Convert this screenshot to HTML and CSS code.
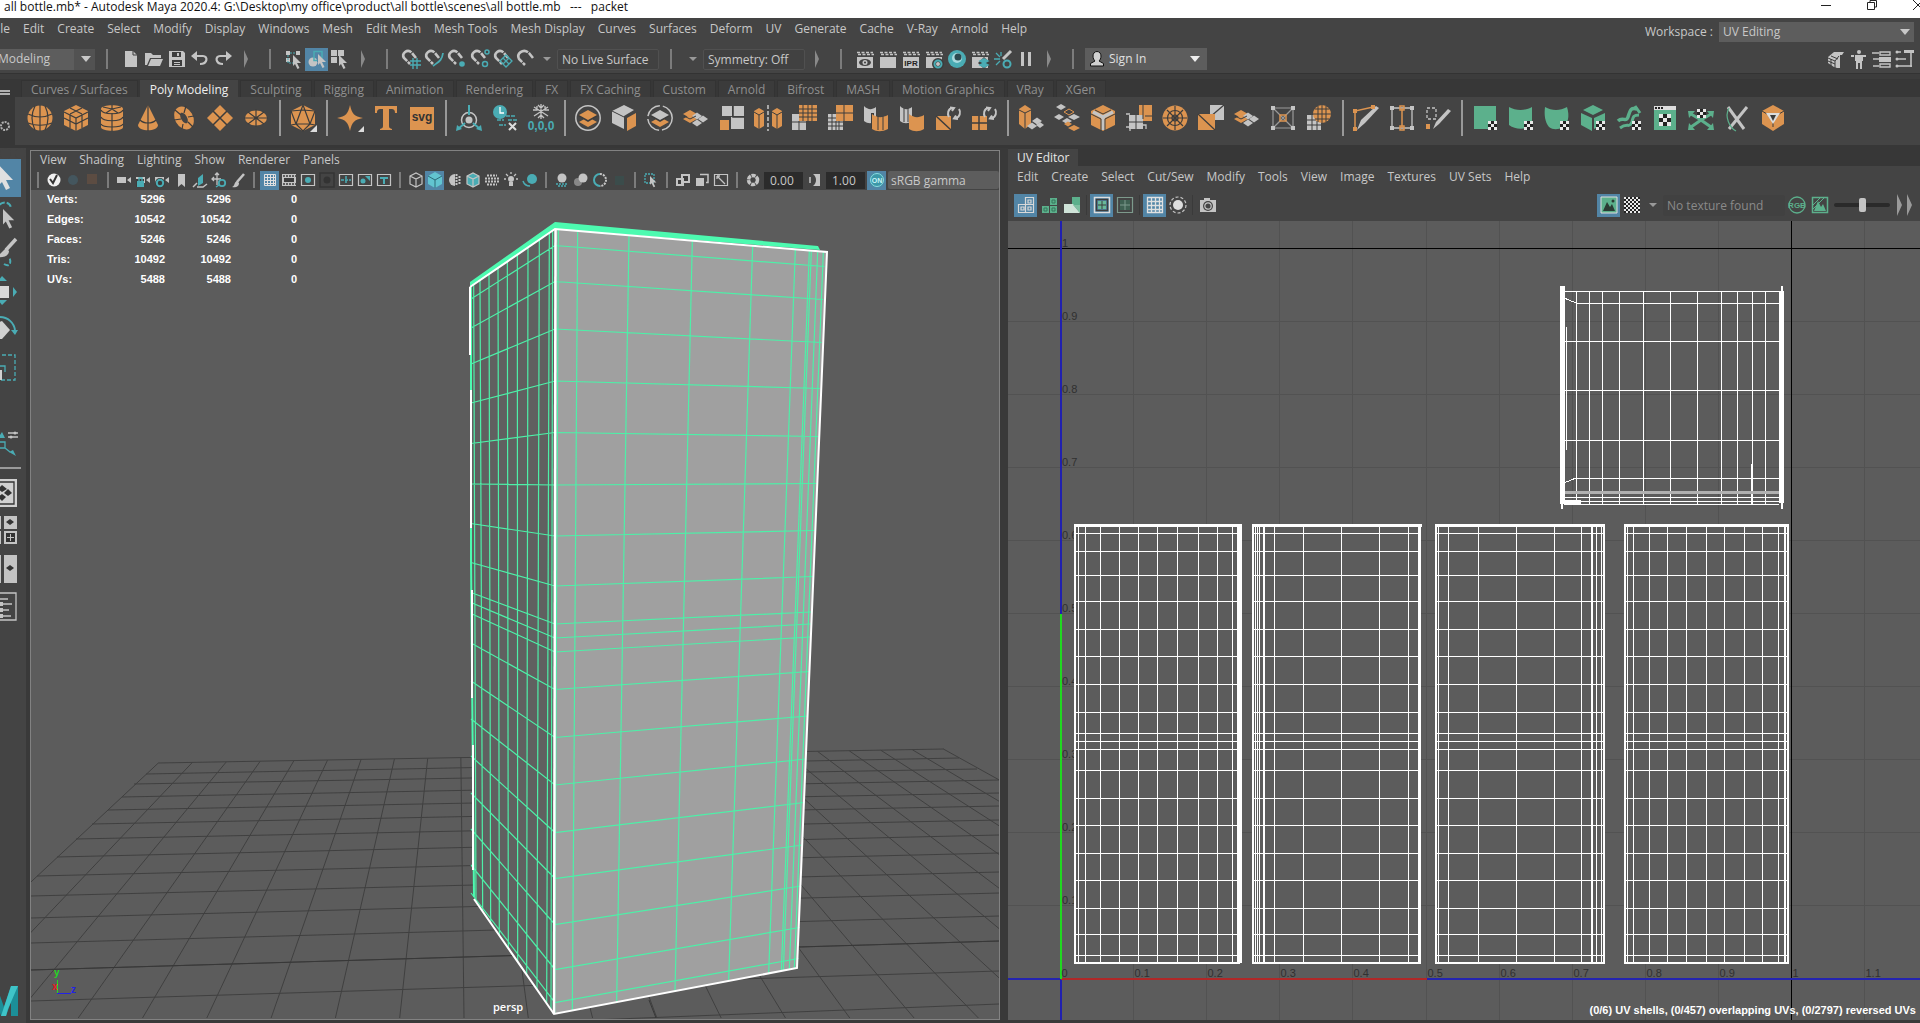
FILE: index.html
```html
<!DOCTYPE html>
<html lang="en">
<head>
<meta charset="utf-8">
<title>all bottle.mb* - Autodesk Maya 2020.4</title>
<link rel="stylesheet" href="styles.css">
</head>
<body>
<div class="app">
  <header class="titlebar">
    <span class="title">all bottle.mb* - Autodesk Maya 2020.4: G:\Desktop\my office\product\all bottle\scenes\all bottle.mb&nbsp;&nbsp; ---&nbsp;&nbsp; packet</span>
    <div class="window-buttons">
      <button aria-label="Minimize"><svg width="12" height="12" viewBox="0 0 12 12"><path d="M1 5.500h10" stroke="#222" fill="none"/></svg></button>
      <button aria-label="Restore"><svg width="12" height="12" viewBox="0 0 12 12"><path d="M1.500 2.500h7v7h-7zM4 2V.500h6.500v6.500H9" stroke="#222" fill="none"/></svg></button>
      <button aria-label="Close"><svg width="12" height="12" viewBox="0 0 12 12"><path d="M1 0l10 10M11 0L1 10" stroke="#222" fill="none"/></svg></button>
    </div>
  </header>

  <div class="menubar">
    <nav class="menu menu-main"><a href="#">File</a><a href="#">Edit</a><a href="#">Create</a><a href="#">Select</a><a href="#">Modify</a><a href="#">Display</a><a href="#">Windows</a><a href="#">Mesh</a><a href="#">Edit Mesh</a><a href="#">Mesh Tools</a><a href="#">Mesh Display</a><a href="#">Curves</a><a href="#">Surfaces</a><a href="#">Deform</a><a href="#">UV</a><a href="#">Generate</a><a href="#">Cache</a><a href="#">V-Ray</a><a href="#">Arnold</a><a href="#">Help</a></nav>
    <div class="workspace">
      <label for="workspace">Workspace :</label>
      <span class="picker picker-workspace"><select id="workspace"><option>UV Editing</option></select></span>
    </div>
  </div>

  <div class="statusline">
    <span class="picker picker-mode"><select aria-label="Menu set"><option>Modeling</option></select></span>
    <div class="tools" data-set="status" data-tools="| new open save undo redo > | selH *selO selC > | snapG snapC snapP snapV snapS snap"></div>
    <span class="drop"></span>
    <input class="field" aria-label="Live surface" value="No Live Surface">
    <div class="tools" data-set="status" data-tools="|"></div>
    <span class="drop"></span>
    <input class="field" aria-label="Symmetry" value="Symmetry: Off">
    <div class="tools" data-set="status" data-tools="> | rView rFrame rIpr rSet rRing rLayer rLight pause > |"></div>
    <button class="signin"><svg width="16" height="18" viewBox="0 0 16 18"><path d="M8 1.500c2.500 0 4 2 4 4.500s-1 4-2 5l4.500 2.500V16h-13v-2.500L6 11c-1-1-2-2.500-2-5s1.500-4.500 4-4.500z" fill="#d0d0d0" stroke="#111"/></svg>Sign In<span class="drop"></span></button>
    <div class="tools tools-end" data-set="status" data-tools="sbBox sbMan sbAttr sbTool"></div>
  </div>

  <div class="shelf">
    <div class="shelf-handle"><svg width="16" height="62" viewBox="0 0 16 62"><path d="M0 12h10M0 15h10" stroke="#b0b0b0" stroke-width="2"/><circle cx="5" cy="47" r="4" stroke="#b0b0b0" stroke-width="2" fill="none" stroke-dasharray="2 1"/></svg></div>
    <div class="shelf-body">
      <nav class="tabs"><a href="#">Curves / Surfaces</a><a href="#" class="on">Poly Modeling</a><a href="#">Sculpting</a><a href="#">Rigging</a><a href="#">Animation</a><a href="#">Rendering</a><a href="#">FX</a><a href="#">FX Caching</a><a href="#">Custom</a><a href="#">Arnold</a><a href="#">Bifrost</a><a href="#">MASH</a><a href="#">Motion Graphics</a><a href="#">VRay</a><a href="#">XGen</a></nav>
      <div class="tools" data-set="shelf" data-tools="sphere cube cyl cone torus plane disc | plato | star type svg | pivot hist freeze | combine separate inter boolean extract mirror grid1 grid2 sweep1 sweep2 spin1 spin2 | extrude bridge bevel merge circ quad layer target ballgrid | cut loop pen | uvPlane uvCyl uvSph uvCube uvCont uvEd uvCut uvSew uvGem"></div>
    </div>
  </div>

  <main class="workarea">
    <aside class="toolbox" data-set="box" data-tools="*select lasso paint move rotate scale gap manip line lay1 lay2 lay3 lay4"></aside>

    <section class="panel viewport">
      <nav class="menu"><a href="#">View</a><a href="#">Shading</a><a href="#">Lighting</a><a href="#">Show</a><a href="#">Renderer</a><a href="#">Panels</a></nav>
      <div class="panelbar">
        <div class="tools" data-set="panel" data-tools="| vray dim1 dim2 | cam camLock camSet mark img pan brush | *gridI film gate dimDot cross safe tFrame | wire *shade tex lit dots light shadow | ao blur aa dimSq | pick | iso1 iso2 xray | expo"></div>
        <input class="num" aria-label="Exposure" value="0.00">
        <div class="tools" data-set="panel" data-tools="gamma"></div>
        <input class="num" aria-label="Gamma" value="1.00">
        <div class="tools" data-set="panel" data-tools="*on"></div>
        <input class="field field-view" aria-label="View transform" value="sRGB gamma">
      </div>
      <div class="canvas">
        <svg id="persp" viewBox="31 190 968 829" preserveAspectRatio="xMidYMid slice"></svg>
        <table class="stats">
          <tr><th>Verts:</th><td>5296</td><td>5296</td><td>0</td></tr>
          <tr><th>Edges:</th><td>10542</td><td>10542</td><td>0</td></tr>
          <tr><th>Faces:</th><td>5246</td><td>5246</td><td>0</td></tr>
          <tr><th>Tris:</th><td>10492</td><td>10492</td><td>0</td></tr>
          <tr><th>UVs:</th><td>5488</td><td>5488</td><td>0</td></tr>
        </table>
        <span class="camera">persp</span>
      </div>
    </section>

    <section class="panel uv">
      <div class="uvtabs"><a href="#">UV Editor</a></div>
      <nav class="menu"><a href="#">Edit</a><a href="#">Create</a><a href="#">Select</a><a href="#">Cut/Sew</a><a href="#">Modify</a><a href="#">Tools</a><a href="#">View</a><a href="#">Image</a><a href="#">Textures</a><a href="#">UV Sets</a><a href="#">Help</a></nav>
      <div class="uvbar">
        <div class="tools" data-set="uvt" data-tools="*uWire uShade uDist | *uBord uBord2 | *uGrid uIso | uCam"></div>
        <div class="uvbar-end">
          <div class="tools" data-set="uvt" data-tools="*uImg uCheck"></div>
          <span class="drop"></span>
          <input class="field field-texture" aria-label="Texture" value="No texture found">
          <div class="tools" data-set="uvt" data-tools="uRgb uPic"></div>
          <input type="range" aria-label="Image brightness" min="0" max="100" value="50">
          <svg width="20" height="22" viewBox="0 0 20 22"><path d="M1 0l5 11-5 11zM11 0l5 11-5 11z" fill="#9a9a9a"/></svg>
        </div>
      </div>
      <div class="canvas">
        <svg id="uvs" viewBox="1008 221 912 799" preserveAspectRatio="xMidYMid slice"></svg>
        <span class="uvinfo">(0/6) UV shells, (0/457) overlapping UVs, (0/2797) reversed UVs</span>
      </div>
    </section>
  </main>
</div>
<script src="app.js"></script>
</body>
</html>
```

FILE: styles.css
```css
* { box-sizing: border-box; }
html, body { height: 100%; margin: 0; overflow: hidden; }
body {
  background: #444;
  color: #c8c8c8;
  font: 12px/16px "Open Sans", "Noto Sans", sans-serif;
}
a { color: inherit; text-decoration: none; }
button, input, select { font: inherit; color: inherit; border: 0; margin: 0; padding: 0; background: none; }
svg { display: block; }

.app { display: flex; flex-direction: column; height: 100%; }

.titlebar {
  display: flex; justify-content: space-between; align-items: flex-start;
  height: 18px; padding: 0 0 0 4px; background: #fff; color: #111; line-height: 14px;
}
.window-buttons { display: flex; gap: 34px; margin-right: -4px; }

.menubar { display: flex; justify-content: space-between; height: 27px; }
.menu { display: flex; gap: 13px; white-space: nowrap; }
.menu-main { margin-left: -9px; padding-top: 3px; }
.workspace { display: flex; align-items: center; gap: 6px; padding-right: 6px; }

.picker { position: relative; display: flex; background: #5d5d5d; }
.picker select { appearance: none; width: 100%; height: 20px; padding-left: 4px; border-radius: 0; }
.picker::after, .drop::after {
  content: ""; border: 5px solid transparent; border-top: 6px solid #c8c8c8; border-bottom: 0;
}
.picker::after { position: absolute; right: 4px; top: 7px; pointer-events: none; }
.picker-workspace { width: 195px; }
.picker-mode { width: 95px; }
.picker-mode select { height: 21px; padding-left: 0; text-indent: -2px; border-right: 21px solid #525252; }
.drop { display: flex; align-items: center; justify-content: center; width: 20px; }
.drop::after { border-width: 4px 4px 0; border-top-color: #999; }

.statusline { display: flex; align-items: center; height: 28px; }
.field { width: 102px; height: 21px; padding: 0 4px; border: 1px solid #505050; border-radius: 2px; background: #414141; }
.signin { display: flex; align-items: center; gap: 4px; width: 122px; height: 22px; padding: 0 4px; background: #5d5d5d; color: #e0e0e0; }
.signin .drop { width: 16px; margin-left: auto; }
.signin .drop::after { border-width: 6px 5px 0; border-top-color: #eee; }
.tools-end { margin-left: auto; padding-right: 4px; }

.tools { display: flex; align-items: center; }
.tool { display: flex; align-items: center; justify-content: center; flex: none; }
.tool svg { overflow: visible; }
.tool.on { background: #5285a6; }
.sep, .more { display: flex; justify-content: center; flex: none; }
.sep::before { content: ""; width: 2px; background: #7c7c7c; }
.more::before { content: ""; border: solid transparent; border-width: 9px 0 9px 4px; border-left-color: #8a8a8a; }

.set-status .tool { width: 23px; height: 23px; }
.set-status .sep, .set-status .more { width: 24px; }
.set-status .sep::before { height: 20px; }
.set-shelf { height: 48px; padding-bottom: 6px; }
.set-shelf .tool { width: 36px; height: 36px; }
.set-shelf .sep { width: 11px; }
.set-shelf .sep::before { height: 36px; background: #999; }
.set-panel .tool { width: 19px; height: 19px; }
.set-panel .sep { width: 13px; }
.set-panel .sep::before { height: 16px; }
.set-uvt .tool { width: 23px; height: 23px; }
.set-uvt .sep { width: 7px; }
.set-uvt .sep::before { height: 20px; width: 1px; background: #3a3a3a; }
.set-box { display: flex; flex-direction: column; }
.set-box .tool { width: 21px; height: 38px; justify-content: flex-start; overflow: hidden; }
.set-box .line { width: 21px; height: 2px; margin: 4px 0 5px; background: #9a9a9a; }

.shelf { display: flex; height: 75px; border-top: 1px solid #333; border-bottom: 3px solid #373737; padding-top: 5px; background: #3c3c3c; }
.shelf-handle { width: 15px; background: #373737; }
.shelf-body { flex: 1; background: #444; }
.tabs { display: flex; align-items: flex-end; gap: 2px; height: 18px; padding-left: 6px; background: #373737; color: #8f8f8f; white-space: nowrap; }
.tabs a { height: 17px; padding: 1px 9px 0; background: #3b3b3b; border: 1px solid #333; border-bottom: 0; line-height: 15px; }
.tabs a.on { background: #444; color: #eee; border-color: #444; }
.shelf-body .tools { padding-left: 7px; }

.workarea { flex: 1; display: grid; grid-template-columns: 22px 970fr 912fr; column-gap: 8px; min-height: 0; background: #393939; }
.toolbox { background: #444; border-top: 11px dotted #444; margin-right: -4px; }
.toolbox .logo { margin-top: auto; margin-bottom: 6px; }
.panel { display: flex; flex-direction: column; min-width: 0; min-height: 0; background: #444; }
.canvas { position: relative; flex: 1; min-height: 0; overflow: hidden; background: #5c5c5c; }
.canvas > svg { width: 100%; height: 100%; }

.viewport { margin: 2px 0 3px; border: 1px solid #828282; }
.viewport .menu { padding: 1px 0 0 9px; height: 19px; }
.panelbar { display: flex; align-items: center; gap: 2px; height: 20px; }
.num { width: 39px; height: 17px; padding: 0 6px; background: #2b2b2b; }
.field-view { flex: 1; width: 0; height: 18px; border: 0; background: #5d5d5d; padding: 0 3px; }
.stats { position: absolute; left: 16px; top: -1px; border-collapse: collapse; color: #fff; font: bold 11px/20px "Liberation Sans", sans-serif; }
.stats th, .stats td { padding: 0; text-align: right; width: 66px; }
.stats th { text-align: left; width: 52px; }
.camera { position: absolute; left: 462px; bottom: 4px; color: #fff; font-weight: 600; font-size: 11px; }

.uv { margin-bottom: 3px; }
.uvtabs { height: 18px; padding-top: 1px; background: #373737; display: flex; }
.uvtabs a { padding: 0 9px; background: #444; color: #e8e8e8; line-height: 17px; }
.uv .menu { padding: 3px 0 0 9px; height: 23px; }
.uvbar { display: flex; justify-content: space-between; align-items: center; height: 32px; padding-left: 6px; }
.uvbar-end { display: flex; align-items: center; padding-right: 4px; }
.field-texture { width: 122px; color: #8a8a8a; border: 0; }
input[type=range] { appearance: none; width: 56px; height: 16px; margin: 0 6px 0 3px; }
input[type=range]::-webkit-slider-runnable-track { height: 4px; border-radius: 2px; background: #2a2a2a; }
input[type=range]::-webkit-slider-thumb { appearance: none; width: 7px; height: 14px; margin-top: -5px; border-radius: 2px; background: #c4c4c4; }
.uvinfo { position: absolute; right: 4px; bottom: 2px; color: #fff; font: bold 11px/16px "Liberation Sans", sans-serif; white-space: nowrap; }
.tick { font: 11px "Liberation Sans", sans-serif; fill: #303030; }
.axis-name { font: bold 10px "Liberation Sans", sans-serif; }
```

FILE: app.js
```js
const O = '#dc9450', W = '#c4c4c4', T = '#4aacb4', G = '#5cb08c', D = '#3c3c3c';
const f = (c, d) => `<path d="${d}" fill="${c}"/>`;
const s = (c, d, w = 1.5, x = '') => `<path d="${d}" fill="none" stroke="${c}" stroke-width="${w}" ${x}/>`;
const c = (c, x, y, r) => `<circle cx="${x}" cy="${y}" r="${r}" fill="${c}"/>`;
const ring = (c, x, y, r, w = 1.5, e = '') => `<circle cx="${x}" cy="${y}" r="${r}" fill="none" stroke="${c}" stroke-width="${w}" ${e}/>`;
const dia = (c, x, y, w, h) => f(c, `M${x - w} ${y}L${x} ${y - h}L${x + w} ${y}L${x} ${y + h}z`);
const txt = (c, x, y, size, t, fam = 'Liberation Sans') => `<text x="${x}" y="${y}" font-size="${size}" font-weight="bold" font-family="${fam}" text-anchor="middle" fill="${c}">${t}</text>`;
const checker = (x, y, u, n = 3, a = '#e8e8e8', b = '#222') => {
  let o = f(b, `M${x} ${y}h${u * n}v${u * n}h-${u * n}z`);
  for (let i = 0; i < n; i++) for (let j = 0; j < n; j++) if ((i + j) % 2 === 0) o += f(a, `M${x + i * u} ${y + j * u}h${u}v${u}h-${u}z`);
  return o;
};
const cursor = (x, y, k = 1) => f(W, `M${x} ${y}l${8 * k} ${8 * k}h${-4 * k}l${2.5 * k} ${5 * k}l${-2 * k} ${1 * k}l${-2.5 * k} ${-5 * k}l${-2 * k} ${2 * k}z`);
const magnet = s(W, 'M9 15L3 9C0 4 7-1 11 4L15 9', 2.6, 'stroke-dasharray="3 1 18 1 9"');
const clap = f(W, 'M2 8h16v11H2z') + s(W, 'M2 3.500h16M3 5.500h16', 1.500, 'stroke-dasharray="3 1.500"');
const cam = f(W, 'M1 5h9v6H1zM11 8l4-3v6z');
const swirl = s(W, 'M14 12c-2-3-1-8 3-9M15 2.500l4 .5-2 3M24 4c2 3 1 8-3 9M23 14l-4-.5 2-3', 2);
const frame = s(W, 'M1.500 2.500h13v11h-13z', 1.200);

const icons = {
  status: { size: 20, set: {
    new: f(W, 'M4 2h8l4 4v12H4z') + s(D, 'M12 2v4h4', 1),
    open: f(W, 'M1 4h6l2 2h8v3H6l-3 7H1z') + f(W, 'M7 10h12l-3 7H4z'),
    save: f(W, 'M2 2h14l2 2v14H2z') + f(D, 'M5 3h9v5H5zM5 11h10v6H5z') + f(W, 'M10 4h2v3h-2zM7 13h6v1H7zM7 15h6v1H7z'),
    undo: s(W, 'M4 7h9c5 0 5 8-3 8', 2.200) + f(W, 'M1 7l6-5v10z'),
    redo: s(W, 'M16 7H7c-5 0-5 8 3 8', 2.200) + f(W, 'M19 7l-6-5v10z'),
    selH: f(W, 'M2 2h4v4H2zM2 9h4v4H2zM12 2h4v4h-4z') + s(T, 'M6 4h5M4 6v8h5', 1, 'stroke-dasharray="2 1"') + cursor(9, 6),
    selO: c(W, 6, 13, 4.500) + s(T, 'M7 2.500h8v9h-8z', 1.500) + f('#5285a6', 'M10 4l9 9h-9z') + cursor(11, 5),
    selC: f(W, 'M1 1h6v6H1zM8 1h6v6H8zM1 8h6v6H1z') + cursor(9, 6),
    snapG: magnet + s(T, 'M9 12h11M9 16h11M12 9v11M16 9v11', 1.400),
    snapC: magnet + s(T, 'M19 4c-1 8-5 9-10 13', 1.800),
    snapP: magnet + c(T, 15, 15, 2.800),
    snapV: magnet + ring(T, 15, 15, 2.500) + ring(T, 17, 3, 2),
    snapS: magnet + s(T, 'M7 12l6-6 6 6-6 6zM10 9l6 6M16 9l-6 6', 1.300),
    snap: s(W, 'M9 16L3 10C0 4 8-1 13 4L17 9', 2.6, 'stroke-dasharray="3 1 20 1 9"'),
    rView: clap + `<ellipse cx="10" cy="13.500" rx="6" ry="3.500" fill="#444"/>` + c(W, 10, 13.500, 2.500) + c(D, 10, 13.500, 1),
    rFrame: clap, rIpr: clap + txt('#222', 10, 17, 8, 'IPR'),
    rSet: clap + ring(D, 14, 15, 4, 4) + ring(T, 14, 15, 3.500, 2),
    rRing: c(T, 10, 10, 9) + c('#a8dade', 10, 9, 5) + c('#2c4a50', 11, 8, 3.500),
    rLayer: clap + dia(D, 14, 14, 6, 6) + dia(T, 14, 16, 5.500, 3) + dia(T, 14, 12, 5.500, 3),
    rLight: s(W, 'M10 10L18 2', 3) + ring(T, 14, 15, 3.500, 2) + s(T, 'M1 10h6M3 4l4 4M3 16l4-4M8 3v4', 1.300),
    pause: f(W, 'M5 3h3v14H5zM12 3h3v14h-3z'),
    sbBox: f(W, 'M2 8l6-5h10l-2 3h-2v13H11l-3-1-6-4z') + s(D, 'M2 9l7 3v7M5 7l7 3M2 12l7 3M5 10v7M9 12l4-5', 1),
    sbMan: c(W, 10, 3, 2) + s(W, 'M2 7h16', 2, 'stroke-dasharray="3 1"') + f(W, 'M6 6h8v6h-1v8h-2v-6H9v6H7v-8H6z'),
    sbAttr: s(W, 'M8 3h10v3H8zM8 15h10v3H8zM0 4h7M1 10h6M1 17h6', 1.400) + f(W, 'M7 8h12v5H7z'),
    sbTool: s(W, 'M1 3h5M1 10h10M1 17h10M11 3h5v15M9 17h8', 1.600) + f(W, 'M9 1h10v3H9z') + c(W, 2, 3, 1.500) + c(W, 2, 10, 1.500) + c(W, 2, 17, 1.500),
  } },
  shelf: { size: 26, set: {
    sphere: c(O, 13, 13, 12.500) + s(D, 'M13 0v26M1 9c8 4 16 4 24 0M1 18c8 3 16 3 24 0M8 1C4 9 4 17 8 25M18 1c4 8 4 16 0 24', 1.200),
    cube: f(O, 'M1 6l12-6 12 6v14l-12 6-12-6z') + s(D, 'M1 7l12 6 12-6M13 13v13M1 13l12 6 12-6M7 10v13M19 10v13M7 3l12 6M19 3L7 9', 1.200),
    cyl: f(O, 'M2 4c0-5 22-5 22 0v18c0 5-22 5-22 0z') + s(D, 'M2 5c2 5 20 5 22 0M2 12c2 5 20 5 22 0M2 19c2 4 20 4 22 0M13 8v18M7 8l6-4 6 4M13 4V0M4 2l9 2 9-2', 1.200),
    cone: f(O, 'M13 0l10 20c0 7-20 7-20 0z') + s(D, 'M13 0v26M5 15c4 4 12 4 16 0', 1.200),
    torus: `<ellipse cx="13" cy="13" rx="6" ry="9" transform="rotate(-30 13 13)" fill="none" stroke="${O}" stroke-width="6"/>` + s(D, 'M4 5l6 5M3 15l7-1M15 1l-2 7M23 11l-6 1M22 22l-5-5M11 24l1-5', 1.200),
    plane: dia(O, 13, 13, 13, 13) + s(D, 'M6 6l14 14M20 6L6 20', 1.500),
    disc: `<ellipse cx="13" cy="13" rx="11" ry="7.500" fill="${O}"/>` + s(D, 'M1 13h24M5 7l16 12M21 7L5 19M13 4v18', 1.200),
    plato: f(O, 'M13 0l12 6v14l-12 6L1 20V6z') + s(D, 'M13 0L6 19h14zM1 6l12-1 12 1M1 6l5 13-5 1M25 6l-5 13 5 1M6 19l7 7 7-7', 1.200) + f('#ddd', 'M27 20v7h-7z'),
    star: f(O, 'M13 0c2 9 4 11 13 13-9 2-11 4-13 13-2-9-4-11-13-13 9-2 11-4 13-13z') + f('#ddd', 'M27 21v6h-6z'),
    type: f(O, 'M2 1h22v7h-2c0-3-1-4-4-4h-2v17c0 2 1 2 3 3v1H7v-1c2-1 3-1 3-3V4H8C5 4 4 5 4 8H2z'),
    svg: f(O, 'M1 2h24v23H1z') + txt('#333', 13, 16, 12, 'svg'),
    pivot: c(W, 13, 15, 3.500) + ring(W, 13, 15, 7.500) + s(T, 'M13 0v10M9 18l-7 6M17 18l7 6', 2) + f(T, 'M0 26l1-6 5 4zM26 26l-1-6-5 4z'),
    hist: c(T, 8, 7, 7) + s('#fff', 'M8 2v6h4', 1.300) + s(T, 'M14 11h9M16 15h9M5 15h7M7 20h7', 1.500, 'stroke-dasharray="4 1"') + s('#ddd', 'M17 18l7 7M24 18l-7 7', 2),
    freeze: s(W, 'M13-1v15M6 2l14 9M20 2L6 11M10 0l3 3 3-3M10 13l3-3 3 3M5 5h4V1M21 5h-4V1', 1.300) + txt(T, 13, 25, 12, '0,0,0'),
    combine: ring(W, 13, 13, 12.200) + dia(O, 13, 17, 9, 5) + dia(D, 13, 11, 10, 6) + dia(O, 13, 10, 9, 5),
    separate: f(W, 'M1 6l12-6 10 5-10 6v13L1 18z') + s(D, 'M1 6l12 6', 1) + f(O, 'M16 13l9-5v13l-9 5z'),
    inter: ring(W, 13, 13, 12.200, 1.500, 'stroke-dasharray="17 3"') + dia(O, 13, 17, 9, 5) + dia(D, 13, 11, 10, 6) + dia(W, 13, 10, 9, 5),
    boolean: dia(O, 7, 9, 7, 4) + dia(O, 7, 14, 7, 4) + dia(W, 14, 11, 5, 3.500) + dia(W, 20, 14, 5, 3.500) + dia(W, 14, 18, 5, 3.500) + s(D, 'M1 11l6 3 6-3', 1),
    extract: f(W, 'M3 1h10v10H3zM14 1h11v10H14zM12 12h13v12H12z') + f(O, 'M1 15h9v10H1z') + s(D, 'M14 1v11h12', 1.500),
    mirror: f(O, 'M-1 6l5-3 5 3v15l-5 3-5-3zM17 6l5-3 5 3v15l-5 3-5-3z') + s(D, 'M-1 7l5 3 5-3M4 10v14M17 7l5 3 5-3M22 10v14', 1) + s('#ddd', 'M13 0v26', 1.300, 'stroke-dasharray="4 2"'),
    grid1: f(W, 'M1 9h14v16H1z') + f(O, 'M8 0h18v16H8z') + s(D, 'M12 0v16M17 0v16M21 0v16M8 4h18M8 8h18M8 12h18M1 17h14M8 16v9', 1),
    grid2: f(W, 'M1 9h15v16H1z') + f(O, 'M9 0h17v16H9z') + s(D, 'M17 0v16M9 8h17M5 9v16M9 16v9M12 16v9M1 13h8M1 17h15M1 21h15', 1),
    sweep1: f(W, 'M1 1c4 4 8 4 12 1v14c-4 3-8 3-12 0z') + f(D, 'M8 8h3v15H8z') + f(O, 'M9 9c5 4 10 4 16 1v14c-6 3-11 3-16 0z') + s(D, 'M15 11v14M20 11v14', 1),
    sweep2: f(W, 'M1 1c4 4 8 4 12 1v14c-4 3-8 3-12 0z') + s(D, 'M5 3v14M9 3v14', 1) + f(O, 'M10 9c5 4 10 4 15 1v14c-5 3-10 3-15 0z'),
    spin1: f(O, 'M1 11h15v14H1z') + s(D, 'M1 11l15 14', 1.500) + swirl,
    spin2: f(O, 'M1 11h15v14H1z') + s(D, 'M8 11v14M1 18h15', 1.500) + swirl,
    extrude: f(O, 'M1 4l6-4 6 4v15l-6 5-6-5z') + s(D, 'M1 5l6 3 6-3M7 8v16', 1) + dia(W, 19, 16, 5, 3.500) + dia(W, 14, 21, 5, 3.500) + dia(W, 22, 20, 4, 3),
    bridge: dia(W, 7, 2, 5, 3) + dia(W, 5, 12, 5, 3) + dia(W, 20, 12, 6, 3) + dia(W, 13, 16, 5, 3) + dia(O, 14, 19, 4, 2.500) + dia(O, 20, 23, 6, 3) + s(O, 'M10 7l5-3 5 3-5 3z', 1),
    bevel: f(O, 'M1 6l12-6 12 6v14l-12 6L1 20z') + s(W, 'M3 7l10 5 10-5M13 12v13', 3.500) + s(D, 'M1 9l10 5v12M25 9l-10 5v12M5 5l8 4 8-4', 1),
    merge: f(O, 'M13 0h13v16H13z') + f(W, 'M3 10h14v14H3z') + s(D, 'M17 0v14M3 17h14M10 10v14M19 11h7', 1) + s(W, 'M0 9h4M0 22h4v4M16 20h4v4', 1.300),
    circ: c(O, 13, 13, 12.500) + ring(D, 13, 13, 7.500, 1.200) + ring(D, 13, 13, 3, 1.200) + s(D, 'M13 1v24M1 13h24M5 5l16 16M21 5L5 21', 1.200),
    quad: f(W, 'M12 0h14v15H12z') + s(D, 'M26 0L12 12', 1.200) + f(O, 'M0 9h17v16H0z') + s(D, 'M0 9l17 16', 1.200),
    layer: dia(O, 7, 9, 7, 4) + dia(O, 7, 14, 7, 4) + dia(W, 14, 11, 5, 3.500) + dia(W, 20, 14, 5, 3.500) + dia(W, 14, 18, 5, 3.500) + s(D, 'M1 11l6 3 6-3', 1),
    target: s('#999', 'M3 3h20v20H3zM3 3l20 20M23 3L3 23', 1.200) + f(W, 'M1 1h4v4H1zM21 1h4v4h-4zM1 21h4v4H1zM21 21h4v4h-4z') + s(O, 'M10 10h6v6h-6z', 1.500),
    ballgrid: f(W, 'M1 10h14v15H1z') + s(D, 'M1 15h14M1 20h14M6 10v15M11 10v15', 1) + c(O, 16, 9, 9) + s(D, 'M16 0v18M7 9h18M9 4h14M9 14h14M12 1v16M20 1v16', 1),
    cut: s(O, 'M2 24V6L20 2', 1.500) + f(W, 'M26 3L12 18l-8 7 4-10L23 1z') + f(O, 'M0 4h4v4H0zM18 0h4v4h-4zM0 22h4v4H0z'),
    loop: s(W, 'M3 3h20v20H3z', 1.300) + s(O, 'M13 3v20', 1.500) + f(W, 'M1 1h4v4H1zM21 1h4v4h-4zM1 21h4v4H1zM21 21h4v4h-4z') + s(O, 'M11 1h4v4h-4zM11 21h4v4h-4z', 1.500),
    pen: s(W, 'M2 3h9v11H2z', 1.300, 'stroke-dasharray="3 2"') + f(W, 'M26 6L14 19l-6 5 3-7L23 4z') + f(O, 'M1 19h4v5H1z'),
    uvPlane: f(G, 'M2 1h22v23H2z') + checker(16, 16, 3),
    uvCyl: f(G, 'M1 2c7 4 16 4 23 0v18c-7 5-16 5-23 0z') + checker(16, 16, 3),
    uvSph: f(G, 'M1 2c7 4 15 4 22 0 3 10 1 16-4 20-5 3-10 3-14 0C1 17 0 10 1 2z') + checker(16, 16, 3),
    uvCube: dia(G, 13, 5, 10, 5) + f(G, 'M1 8l11 5v13L1 20zM14 13l11-5v10l-11 6z') + checker(16, 16, 3),
    uvCont: s(G, 'M2 16c5-5 8 2 10-4S14 2 21 4', 3.5) + s(G, 'M4 23c8-6 9 1 12-6 1-6 2-7 7-7M19 1l5 7', 3) + checker(16, 16, 3),
    uvEd: f(G, 'M2 1h22v24H2z') + f('#ddd', 'M2 1h22v4H2z') + s('#222', 'M3 3h8', 2, 'stroke-dasharray="2 1"') + checker(7, 9, 4),
    uvCut: s(G, 'M3 9l10 6-10 7M23 9l-10 6 10 7', 3) + f(G, 'M0 6h7l-6 7zM26 6h-7l6 7zM0 25h7l-6-7zM26 25h-7l6-7z') + checker(9, 4, 3),
    uvSew: s(W, 'M4 2l16 22', 3) + s(W, 'M23 2L5 24', 3) + s(G, 'M5 3C0 12 6 23 12 26', 1.200),
    uvGem: f(O, 'M13 0l11 6v13l-11 7L2 19V6z') + s(D, 'M13 22V14M2 6l5 3M24 6l-5 3', 1) + f('#ddd', 'M6 8h14l-7 11z') + f(D, 'M10 10h6l-3 6z'),
  } },
  panel: { size: 16, set: {
    vray: c('#f0f0f0', 8, 8, 6.500) + s('#333', 'M4 7l3 4 4-8', 2),
    dim1: c('#44565e', 8, 8, 5), dim2: f('#5c4c42', 'M3 2h10v10H3z'),
    cam, camLock: cam + f(D, 'M1 7h8v8H1z') + f(T, 'M2 9h7v6H2z') + s(T, 'M4 9V6h3v3', 1.300),
    camSet: cam + c(D, 6, 11, 5) + ring(T, 6, 11, 3.200, 2),
    mark: f(W, 'M5 2h7v13l-3.500-3L5 15z'),
    img: f(T, 'M6 6l5-4v9l-5 3z') + s(W, 'M1 15l4-4M5 15h6l4-3', 1.500),
    pan: s(W, 'M6 1v12M1 7h9M4 3l2-2 2 2M3 5L1 7l2 2', 1.300) + ring(T, 11, 11, 3.200, 1.800) + s(T, 'M8 13l-3 2'),
    brush: s(W, 'M14 2L7 10', 2.500) + f(W, 'M7 9l2 2c0 4-4 5-7 4 3-1 2-5 5-6z'),
    gridI: s('#e0e0e0', 'M2.500 2.500h11v11h-11zM5.500 2v12M8.500 2v12M11.500 2v12M2 5.500h12M2 8.500h12M2 11.500h12', 1),
    film: f(W, 'M1 2h14v12H1z') + f(D, 'M3 6h10v4H3z') + s(D, 'M2 4h13M2 12h13', 1.500, 'stroke-dasharray="2 1"'),
    gate: frame + c(T, 8, 8, 3), dimDot: s('#353535', 'M1 1h14v14H1z') + c('#333', 8, 8, 3.500),
    cross: frame + s(T, 'M3 8h10M8 4v8', 1.500, 'stroke-dasharray="3 1"'),
    safe: frame + c(T, 6, 9, 2.500) + f(T, 'M8 4h5v5z'), tFrame: frame + f(T, 'M4 5h8v2H9v5H7V7H4z'),
    wire: s(W, 'M2 4l6-3 6 3v8l-6 3-6-3zM2 4l6 3 6-3M8 7v8', 1.200),
    shade: f('#62c4d0', 'M1 4l7-4 7 4v8l-7 4-7-4z') + s('#2c6a78', 'M1 4l7 4 7-4M8 8v8', 1),
    tex: f(W, 'M9 2a6 6 0 0 0 0 12z') + s(W, 'M10.500 2v12M13.500 4v9', 2, 'stroke-dasharray="2 1"'), lit: f(T, 'M2 4l6-3 6 3v8l-6 3-6-3z') + s(W, 'M2 4l6-3 6 3v8l-6 3-6-3zM2 4l6 3 6-3M8 7v8', 1.200),
    dots: s(W, 'M3 3.500h10M1 6.500h14M1 9.500h14M3 12.500h10', 1.800, 'stroke-dasharray="2 1"'),
    light: c(W, 8, 7, 3) + f(W, 'M6 10h4v4H6z') + s(W, 'M8 0v2M1 7h2M13 7h2M3 2l2 2M13 2l-2 2', 1.300),
    shadow: c(T, 10, 7, 5) + s(T, 'M1 9c1 3 4 5 7 5', 1.500),
    ao: c(W, 8, 6, 4.500) + s(T, 'M2 12h12M4 14h9', 1.500, 'stroke-dasharray="2 1"'), blur: c('#888', 5, 10, 4) + c(W, 10, 6, 4.500),
    aa: s(W, 'M8 2a6 6 0 0 1 0 12', 2, 'stroke-dasharray="2 1"') + s(T, 'M8 2a6 6 0 0 0 0 12', 2), dimSq: f('#3b4c4b', 'M4 4h9v9H4z'),
    pick: s(T, 'M2 2h9v9H2z', 1.300, 'stroke-dasharray="2 1"') + cursor(7, 4, .8),
    iso1: f(W, 'M6 2h9v9H6z') + f(D, 'M8 4h5v5H8z') + f(W, 'M1 6h8v8H1z') + f(D, 'M3 8h3v4H3z'), iso2: s(W, 'M6 2.500h8v8h-2', 1.500) + f(W, 'M2 6h8v8H2z'),
    xray: frame + s(W, 'M4 4l8 8M4 4h3M4 4v3', 1.300),
    expo: ring(W, 8, 8, 4.500, 3.500, 'stroke-dasharray="4 .8"'), gamma: f(W, 'M6 2h7v12H6c4-3 4-9 0-12z') + s(W, 'M3 5v6', 1.500),
    on: c('#3c98a8', 8, 8, 7.500) + ring('#8fd8e0', 8, 8, 6.500, 1) + txt('#c8f4f8', 8, 10.500, 7, 'ON'),
  } },
  uvt: { size: 18, set: {
    uWire: s('#d8d8d8', 'M1.500 8.500h15v8h-15zM8.500 1.500h8v15h-8zM4 11h3v3H4zM11 4h3v3h-3zM11 11h3v3h-3z', 1.200),
    uShade: f(G, 'M2 10h7v7H2zM10 10h7v7h-7zM10 2h7v7h-7z') + s('#35765a', 'M4 12h3v3H4zM12 12h3v3h-3zM12 4h3v3h-3z', 1),
    uDist: f(G, 'M9 1h8v8H9z') + f('#cfe3d8', 'M1 8h9l7 9H1z') + f('#7fc0a2', 'M10 9h7v8z'),
    uBord: s('#ddd', 'M1.500 1.500h15v15h-15z', 1.500) + s(D, 'M3.500 3.500h11v11h-11z') + f('#69b89a', 'M5 5h8v8H5z') + s(D, 'M9 5v8M5 9h8', 1),
    uBord2: s('#7d9a8c', 'M1.500 1.500h15v15h-15z', 1.200) + f('#3f6152', 'M4 4h10v10H4z') + s('#7d9a8c', 'M9 4v10M4 9h10', 1),
    uGrid: s('#e0e0e0', 'M1.500 1.500h15v15h-15zM5.500 1v16M9.500 1v16M13.500 1v16M1 5.500h16M1 9.500h16M1 13.500h16', 1.300),
    uIso: c('#ddd', 9, 9, 5) + ring(W, 9, 9, 8, 1.200, 'stroke-dasharray="3 2"'),
    uCam: f(W, 'M1 4h4V2h6v2h6v12H1z') + c('#444', 9, 10, 5) + ring(W, 9, 10, 3.200, 1.200),
    uImg: f(G, 'M1 1h16v16H1z') + s('#ddd', 'M1 1h16v16H1z', 1) + f('#2b3b34', 'M3 15l4-9 3 5 2-3 3 7z') + c('#2b3b34', 13, 5, 1.500),
    uCheck: checker(1, 1, 2, 8),
    uRgb: ring(G, 9, 9, 8, 1.300) + txt(G, 9, 12, 8, 'RGB'),
    uPic: s(G, 'M1.500 1.500h15v15h-15z') + f(G, 'M3 15l4-10 3 6 2-3 3 7z') + s(G, 'M2 9l7-7M2 13L13 2', 1),
  } },
  box: { size: [21, 32], set: {
    select: f('#e0e0e0', 'M-6-2L13 18H6l4 8-4 2-4-8-8 8z'),
    lasso: s(T, 'M-4 12C-2 0 10 0 11 8', 2, 'stroke-dasharray="6 2"') + cursor(3, 9, 1.400),
    paint: s(W, 'M16 1L6 12', 3.500) + f(W, 'M6 10l3 3c0 5-6 7-12 6z') + s(T, 'M4 26c6 4 8-2 5-7', 2, 'stroke-dasharray="5 2"'),
    move: f('#d8d8d8', 'M-5 10H9v12H-5z') + f(T, 'M2 0l5 5h-9zM2 29l5-5h-9zM17 16l-4-5v10z'),
    rotate: f('#d0d0d0', 'M-6 10l8-3 8 9-8 9h-8z') + s(T, 'M0 3c8 0 14 6 15 13', 2) + f(T, 'M11 16h7l-3 5z'),
    scale: s(T, 'M-4 3h19v25H-4z', 1.300, 'stroke-dasharray="4 2"') + f('#d0d0d0', 'M-4 18h6v10h-6z') + s(T, 'M-2 14h7v6', 1.300),
    gap: '', manip: f(T, 'M-2 10l4-6 3 6zM9 24l7 4-3-6z') + s(T, 'M-2 14h7v6h-7M5 20l5 4', 1.300) + s(W, 'M8 5h10M8 9h10', 1.300) + c(W, 15, 5, 1.500) + c(W, 11, 9, 1.500),
    lay1: f('#d0d0d0', 'M-8 2h25v28H-8z') + s('#333', 'M-6 5h20v22H-6', 1.300) + f('#333', 'M2 8l5 4-5 3-4-3zM8 12l4 4-4 3-4-3zM2 17l4 3-4 4-4-4z'),
    lay2: f(W, 'M-8 1h9v13h-9zM4 1h13v13H4zM-8 16h9v13h-9zM4 16h13v13H4z') + f('#333', 'M10 4l4 3-4 3-4-3zM6 18h9v9H6z') + s(W, 'M10.500 19v7M7 22.500h7', 1),
    lay3: f(W, 'M-8 2h9v28h-9zM4 2h13v28H4z') + f('#333', 'M10 12l4 3-4 3-4-3z'),
    lay4: s(W, 'M-4 2h20v27H-4z', 1.300) + s(W, 'M0 8h8M0 13h12M0 19h9M0 25h11', 1.300) + f(W, 'M0 11h3v4H0zM0 17h3v4H0zM0 23h3v4H0z'),
  } },
};

for (const bar of document.querySelectorAll('[data-tools]')) {
  const kind = bar.dataset.set, { size, set } = icons[kind];
  const [w, h] = [].concat(size, size);
  bar.classList.add('set-' + kind);
  bar.innerHTML = bar.dataset.tools.split(' ').map((name) => {
    if (name === '|') return '<span class="sep"></span>';
    if (name === '>') return '<span class="more"></span>';
    if (name === 'line') return '<span class="line"></span>';
    if (name === 'gap') return '<span class="tool"></span>';
    const on = name[0] === '*', id = on ? name.slice(1) : name;
    return `<button class="tool${on ? ' on' : ''}" aria-label="${id}"><svg width="${w}" height="${h}" viewBox="0 0 ${w} ${h}">${set[id]}</svg></button>`;
  }).join('');
}
document.querySelector('.toolbox').insertAdjacentHTML('beforeend',
  `<svg class="logo" width="20" height="32" viewBox="0 0 20 32">${f('#1c8f98', 'M18 1v30h-7V17L6 31H1L-6 8l4-3 6 17L11 1z') + f('#3fc4c8', 'M18 1L8 24 6 31H1L11 1z')}</svg>`);

/* perspective view: ground grid, then the packet mesh */
const lerp = (a, b, t) => a + (b - a) * t;
function drawPersp() {
  let o = '', grid = '';
  const left = [[158, 763], [146, 774], [134, 784], [122, 797], [108, 810], [92, 824], [76, 839], [57, 857], [37, 876], [31, 896], [31, 918], [31, 943], [31, 970], [31, 1001], [31, 1042]];
  const right = [[944, 749], [959, 758], [977, 769], [999, 780], [999, 793], [999, 806], [999, 820], [999, 835], [999, 853], [999, 872], [999, 893], [999, 916], [999, 941], [999, 971], [999, 1004]];
  left.forEach((p, i) => { grid += `M${p}L${right[i]}`; });
  for (let n = 0; n <= 24; n++) {
    const x = 158 + 34.2 * n - .061 * n * n;
    grid += `M${x} ${763.3 - .018 * (x - 158)}L${464 + 64.3 * (n - 9)} 1018`;
  }
  o += s('#404040', grid, 1) + s('#383838', 'M31 970L999 941M649 1000L656 1018', 1);

  o += f('#a0a0a0', 'M555 229L827 252 797 968 554 1014z') + f('#606060', 'M470 287L555 229 554 1014 474 899z');
  const yl = [299, 328, 364, 403, 443.500, 484, 523.500, 562.500, 592.500, 602.500, 613.500, 643, 681, 719, 756, 793, 829, 865, 893];
  const yc = [245.500, 281.500, 329, 381, 432.500, 485, 536, 586, 624, 638, 652, 689.500, 737.500, 785, 832.500, 878.500, 924.500, 969.500, 1002.500];
  const yr = [266.500, 299.500, 342.500, 388.500, 436.500, 483.500, 530.500, 576.500, 612, 624, 637, 671.500, 716, 759, 802.500, 845, 886, 927.500, 958.500];
  let m = '';
  yc.forEach((y, i) => { m += `M471 ${yl[i]}L555 ${y}L${lerp(825, 798, (yr[i] - 252) / 716)} ${yr[i]}`; });
  for (const [a, b] of [[413, 397], [567, 530], [757, 705], [938, 866], [1066, 986], [1108, 1024], [1114, 1030], [1133, 1048], [1150, 1063], [355, 344]])
    m += `M${440 + a / 3} ${229 + (a - 345) / 35}L${440 + b / 3} ${1014 - (b - 340) / 15.900}`;
  for (const [a, b] of [[101, 108], [120, 128], [147, 152], [174, 178], [202, 205], [232, 233], [264, 260], [298, 291], [328, 320], [338, 333]])
    m += `M${440 + a / 3} ${287 - (a - 90) / 4.400}L${440 + b / 3} ${899 + (b - 102) / 2.080}`;
  o += s('#4df0a8', m, 1.2);
  o += f('#4dfab0', 'M470 287V282L555 222 818 246 820 250 555 229z');
  o += s('#4dfab0', 'M471 285V560L474 897', 2);
  o += s('#fff', 'M470 287L555 229 827 252 797 968 554 1014 474 899M470 287V355M471 390V528M472 590V698M473 745V870', 2);
  o += s('#fff', 'M555.500 229L554 1014', 2.500);
  o += s('#22d822', 'M57.500 980V993', 1) + s('#2222e8', 'M57 993.500H71', 1);
  o += `<text class="axis-name" x="54" y="976" fill="#22d822">y</text><text class="axis-name" x="71" y="993" fill="#2222e8">z</text><text class="axis-name" x="52" y="990" fill="#e02222">x</text>`;
  document.getElementById('persp').innerHTML = o;
}

/* UV canvas: tenth lines, unit frame, axes and the five shells */
function drawUvs() {
  const X = (u) => Math.round(1061 + u * 731) - .5, Y = (v) => Math.round(978 - v * 730) + .5;
  let grid = '', labels = '', mesh = '', thick = '', o = '';
  for (let i = -1; i <= 11; i++) grid += `M${X(i / 10)} 221V1020M1008 ${Y(i / 10)}H1920`;
  o += s('#525252', grid, 1) + s('#000', `M1008 ${Y(1)}H1920M${X(1)} 221V1020`, 1);
  o += s('#2020b0', `M1061 221V1020`, 2) + s('#2424b0', `M1008 979H1920`, 2);
  o += s('#b02828', `M1061 979H${X(.5)}`, 2) + s('#20d820', `M1061 979V${Y(.5)}`, 2);
  for (let i = 0; i <= 11; i++) {
    const t = i % 10 ? (i / 10).toFixed(1) : String(i / 10);
    labels += `<text class="tick" x="${X(i / 10) + 1}" y="977">${t}</text>`;
    if (i > 0 && i < 11) labels += `<text class="tick" x="1062" y="${Y(i / 10) - 2}">${t}</text>`;
  }
  const rows = [533, 551, 575, 601, 629, 656, 684, 712, 733, 741, 749, 770, 798, 825, 853, 880, 908, 934, 955];
  const shells = [
    [1075, 1239, [1078, 1085, 1100, 1119, 1138, 1157, 1177, 1198, 1217, 1232, 1237]],
    [1253, 1420, [1255, 1257, 1259, 1263, 1264, 1274, 1303, 1341, 1379, 1408, 1418]],
    [1436, 1604, [1438, 1448, 1478, 1516, 1554, 1581, 1591, 1592, 1596, 1601]],
    [1625, 1788, [1627, 1633, 1649, 1667, 1686, 1706, 1724, 1744, 1762, 1778, 1784, 1785]],
  ];
  let cover = '';
  for (const [a, b, cols] of shells) {
    cover += `M${a} 524H${b}V963H${a}z`;
    for (const y of rows) mesh += `M${a} ${y + .5}H${b}`;
    for (const x of cols) mesh += `M${x + .5} 524V963`;
    thick += `M${a} 525H${b}V963H${a}z`;
  }
  for (const x of [1576, 1589, 1602, 1619, 1643, 1670, 1697, 1721, 1737, 1752, 1765]) mesh += `M${x + .5} 291V504`;
  for (const y of [291, 303, 341, 390, 440, 478, 497, 501, 504]) mesh += `M${y === 303 || y === 478 ? 1576 : 1564} ${y + .5}H1779`;
  mesh += 'M1566.500 327V450M1564 298L1576 303M1564 483L1576 478M1697 485V504M1751 464V504';
  o += labels + f('#5c5c5c', cover) + s('#fff', mesh, 1) + s('#b0b0b0', 'M1564 492H1779', 3);
  o += s('#fff', thick, 2) + s('#fff', 'M1074 525H1242M1252 525H1422M1435 525H1605M1624 525H1789', 3) + s('#fff', 'M1240 524V963', 3) + s('#fff', 'M1562 286V504M1781 291V503', 5) + s('#fff', 'M1562 500V509M1782 286V509', 2) + s('#fff', 'M1564 502H1581', 4);
  document.getElementById('uvs').innerHTML = `<g shape-rendering="crispEdges">${o}</g>`;
}
drawPersp();
drawUvs();
```
